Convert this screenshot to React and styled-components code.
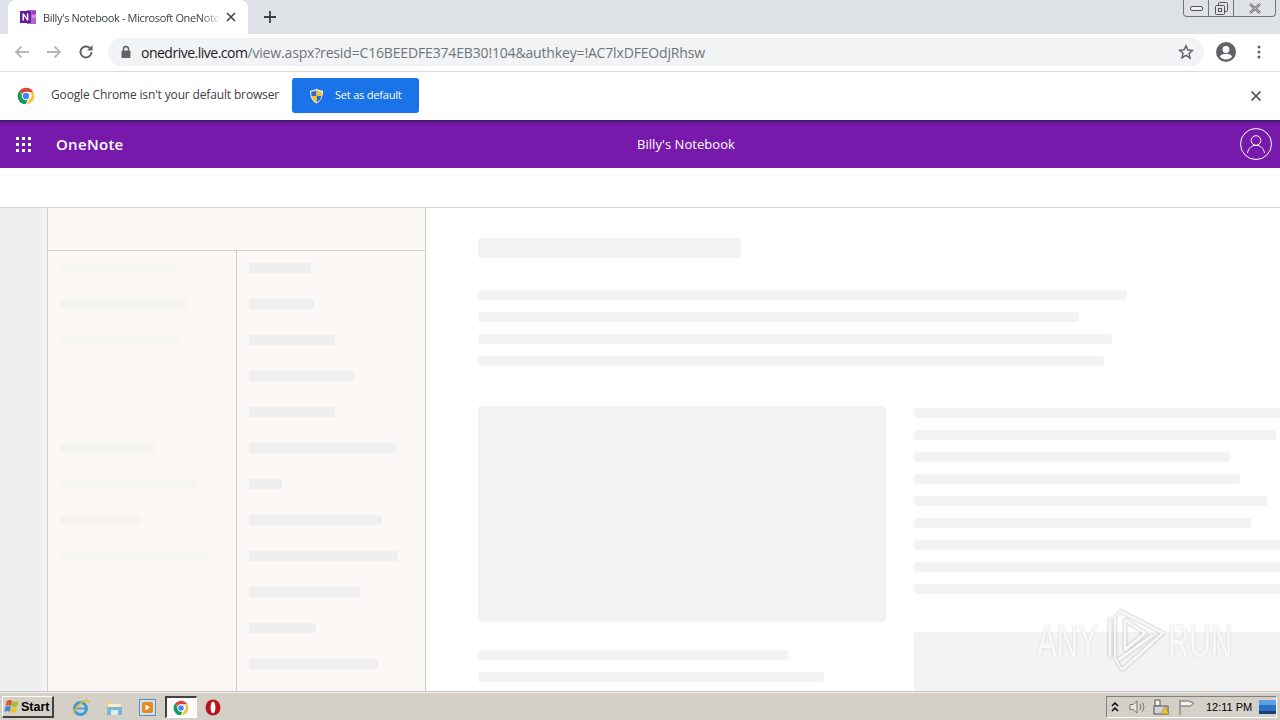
import React from 'react';
import styled, {createGlobalStyle} from 'styled-components';

const GlobalStyle = createGlobalStyle`
  html, body {
    margin: 0;
    padding: 0;
    background: #fff;
  }
  * {
    box-sizing: border-box;
  }
`;

const Screen = styled.div`
  position: relative;
  width: 1280px;
  height: 720px;
  display: flex;
  flex-direction: column;
  overflow: hidden;
  font-family: "Open Sans", "Liberation Sans", sans-serif;
`;

const TabStrip = styled.div`
  height: 34px;
  flex: none;
  display: flex;
  align-items: flex-start;
  padding: 0 4px 0 8px;
  background: #dee1e6;
`;

const Tab = styled.div`
  width: 240px;
  height: 34px;
  display: flex;
  align-items: center;
  padding: 0 12px 0 12px;
  gap: 4px;
  background: #fff;
  border-radius: 8px 8px 0 0;
`;

const TabTitle = styled.span`
  flex: 1;
  margin-left: 3px;
  font-size: 11px;
  letter-spacing: -0.36px;
  color: #3c4043;
  white-space: nowrap;
  overflow: hidden;
  -webkit-mask-image: linear-gradient(to right, #000 88%, transparent);
  mask-image: linear-gradient(to right, #000 88%, transparent);
`;

const NewTab = styled.div`
  width: 44px;
  height: 34px;
  display: flex;
  align-items: center;
  justify-content: center;
`;

const WindowControls = styled.div`
  margin-left: auto;
  width: 93px;
  height: 17px;
  display: flex;
  border: 1px solid #6f7680;
  border-top: none;
  border-radius: 0 0 4px 4px;
`;

const WindowButton = styled.div`
  width: ${p => p.$w}px;
  display: flex;
  align-items: center;
  justify-content: center;
  border-right: ${p => (p.$last ? 'none' : '1px solid #6f7680')};
`;

const Toolbar = styled.div`
  height: 38px;
  flex: none;
  display: flex;
  align-items: center;
  padding: 0 8px 1px 6px;
  background: #fff;
  border-bottom: 1px solid #dcdcdc;
`;

const NavButton = styled.div`
  width: 32px;
  height: 28px;
  display: flex;
  align-items: center;
  justify-content: center;
`;

const Omnibox = styled.div`
  width: 1096px;
  height: 28px;
  margin-left: 6px;
  display: flex;
  align-items: center;
  padding: 0 10px 0 12px;
  background: #f1f3f4;
  border-radius: 14px;
`;

const Url = styled.div`
  flex: 1;
  margin-left: 9px;
  font-size: 14px;
  letter-spacing: -0.16px;
  color: #70757a;
  white-space: nowrap;
`;

const Host = styled.span`
  color: #202124;
  letter-spacing: -0.5px;
`;

const ToolbarEnd = styled.div`
  flex: 1;
  display: flex;
  align-items: center;
  justify-content: space-between;
  padding: 0 11px 0 12px;
`;

const InfoBar = styled.div`
  height: 48px;
  flex: none;
  display: flex;
  align-items: center;
  padding: 0 19px 1px 17px;
  background: #fff;
`;

const InfoText = styled.span`
  margin-left: 16px;
  padding-bottom: 2px;
  font-size: 12px;
  letter-spacing: -0.15px;
  color: #3c4043;
  white-space: nowrap;
  width: 241px;
`;

const DefaultButton = styled.div`
  width: 127px;
  height: 35px;
  display: flex;
  align-items: center;
  padding-left: 17px;
  gap: 11px;
  background: #1a73e8;
  border-radius: 3px;
  font-size: 11px;
  letter-spacing: -0.2px;
  color: #fff;
`;

const DefaultLabel = styled.span`
  padding-bottom: 2px;
`;

const InfoClose = styled.div`
  margin-left: auto;
  display: flex;
`;

const AppBar = styled.div`
  height: 48px;
  flex: none;
  display: grid;
  grid-template-columns: 56px 1fr 40px;
  align-items: center;
  background: linear-gradient(to bottom, #3d1560 0, #6a189a 3px, #7719aa 5px);
  color: #fff;
`;

const Waffle = styled.div`
  display: grid;
  grid-template-columns: repeat(3, 3px);
  gap: 3px;
  margin-left: 16px;
  & > i {
    width: 3px;
    height: 3px;
    background: #fff;
  }
`;

const Brand = styled.div`
  display: flex;
  align-items: center;
`;

const BrandName = styled.span`
  width: 581px;
  font-size: 15px;
  font-weight: 600;
  letter-spacing: 0.3px;
`;

const NotebookName = styled.span`
  font-size: 13px;
  letter-spacing: 0.05px;
`;

const UserButton = styled.div`
  width: 32px;
  height: 32px;
  display: flex;
  align-items: center;
  justify-content: center;
  border: 1px solid #fff;
  border-radius: 50%;
`;

const Ribbon = styled.div`
  height: 40px;
  flex: none;
  background: #fff;
  border-bottom: 1px solid #d6d6d6;
`;

const Content = styled.div`
  flex: 1;
  min-height: 0;
  display: flex;
  overflow: hidden;
  background: #fff;
`;

const Rail = styled.div`
  width: 47px;
  flex: none;
  background: #efefef;
  border-right: 5px solid #f3f3f3;
`;

const NavPanel = styled.div`
  width: 379px;
  flex: none;
  display: flex;
  flex-direction: column;
  background: #fbf8f5;
  border-left: 1px solid #cfcdca;
  border-right: 1px solid #cfcdca;
`;

const NavHeader = styled.div`
  height: 43px;
  flex: none;
  display: flex;
  align-items: center;
  justify-content: center;
  border-bottom: 1px solid #d5d3d0;
`;

const NavColumns = styled.div`
  flex: 1;
  display: grid;
  grid-template-columns: 188px 1fr;
`;

const NavColumn = styled.div`
  display: flex;
  flex-direction: column;
  gap: 26px;
  padding: 12px 0 0 ${p => p.$inset}px;
  border-left: ${p => (p.$divided ? '1px solid #cfcdca' : 'none')};
`;

const Bar = styled.div`
  flex: none;
  width: ${p => p.$w}px;
  height: ${p => p.$h || 10}px;
  background: ${p => p.$tone || '#f3f3f3'};
  border-radius: 3px;
`;

const Main = styled.div`
  flex: 1;
  min-width: 0;
  display: flex;
  flex-direction: column;
  padding: 30px 0 0 52px;
`;

const TextLines = styled.div`
  display: flex;
  flex-direction: column;
  gap: 12px;
  margin-top: ${p => p.$top || 0}px;
`;

const MainGrid = styled.div`
  display: grid;
  grid-template-columns: 408px 1fr;
  column-gap: 28px;
  margin-top: 40px;
`;

const MainColumn = styled.div`
  min-width: 0;
  display: flex;
  flex-direction: column;
`;

const Picture = styled.div`
  height: ${p => p.$h}px;
  margin-top: ${p => p.$top || 0}px;
  background: #f3f3f3;
  border-radius: 2px;
`;

const Taskbar = styled.div`
  height: 28px;
  flex: none;
  display: flex;
  align-items: center;
  padding: 1px 3px 0 2px;
  background: #d4d0c8;
  border-top: 1px solid #f4f2ee;
  box-shadow: 0 -1px 0 #c6c4c0;
`;

const StartButton = styled.div`
  width: 52px;
  height: 22px;
  display: flex;
  align-items: center;
  gap: 1px;
  padding-left: 1px;
  font-family: "Liberation Sans", sans-serif;
  font-size: 12.5px;
  font-weight: 700;
  color: #000;
  border-style: solid;
  border-width: 1px 2px 2px 1px;
  border-color: #fff #404040 #404040 #fff;
`;

const QuickLaunch = styled.div`
  display: flex;
  align-items: center;
  margin-left: 10px;
`;

const LaunchItem = styled.div`
  width: ${p => (p.$active ? 32 : 33.5)}px;
  height: 22px;
  display: flex;
  align-items: center;
  justify-content: center;
  background: ${p => (p.$active ? '#fbfaf8' : 'transparent')};
  border-style: ${p => (p.$active ? 'solid' : 'none')};
  border-width: 2px 1px 1px 2px;
  border-color: #404040 #fff #fff #404040;
`;

const Tray = styled.div`
  margin-left: auto;
  width: 171px;
  height: 22px;
  display: flex;
  align-items: center;
  border: 1px solid;
  border-color: #808080 #fff #fff #808080;
`;

const TrayIcon = styled.svg`
  flex: none;
  margin-left: ${p => p.$gap || 0}px;
`;

const Clock = styled.span`
  margin-left: 10px;
  width: 61px;
  font-family: "Liberation Sans", sans-serif;
  font-size: 11px;
  color: #000;
  white-space: nowrap;
`;

const Watermark = styled.div`
  position: absolute;
  left: 1037px;
  top: 608px;
  display: flex;
  align-items: center;
  pointer-events: none;
`;

const WatermarkWord = styled.span`
  flex: none;
  min-width: 0;
  width: ${p => p.$w}px;
  font-family: "Liberation Sans", sans-serif;
  font-size: 47px;
  line-height: 66px;
  color: #f7f7f7;
  white-space: nowrap;
  -webkit-text-stroke: 1px #f9f9f9;
  text-shadow: 0 0 2px rgba(110, 110, 110, 0.55);
  transform: scaleX(0.63);
  transform-origin: left center;
`;

const WatermarkPlay = styled.svg`
  flex: none;
  filter: drop-shadow(0 0 1px rgba(110, 110, 110, 0.55));
`;

const OneNoteIcon = () => (
  <svg width="16" height="16" viewBox="0 0 16 16">
    <rect x="7" y="1" width="9" height="14" fill="#b163d0" />
    <rect x="12" y="2" width="4" height="3" fill="#a33fc4" />
    <rect x="12" y="6" width="4" height="3" fill="#d18de5" />
    <rect x="0" y="2" width="11" height="12" fill="#6a1b9a" />
    <path d="M2.500 11.500v-7h1.400l3 4.400V4.500h1.500v7H7L4 7.100v4.400z" fill="#fff" />
  </svg>
);

const ChromeIcon = ({size = 18}) => (
  <svg width={size} height={size} viewBox="0 0 48 48">
    <path d="M24 2a22 22 0 0 1 19.100 11H24a11 11 0 0 0-10 6.500L6.800 10A22 22 0 0 1 24 2z" fill="#db4437" />
    <path d="M43.100 13A22 22 0 0 1 26 45.900L35 31a11 11 0 0 0-1-18z" fill="#fbc02d" />
    <path d="M6.800 10L16 26a11 11 0 0 0 12.500 8.500L23 46A22 22 0 0 1 6.800 10z" fill="#0f9d58" />
    <circle cx="24" cy="24" r="10" fill="#4285f4" stroke="#fff" strokeWidth="3" />
  </svg>
);

const ShieldIcon = () => (
  <svg width="15" height="16" viewBox="0 0 15 16">
    <path d="M7.500 0.500C9.500 2 11.500 2.500 14 2.500c0 6-1.500 10.500-6.500 13C2.500 13 1 8.500 1 2.500 3.500 2.500 5.500 2 7.500 0.500z" fill="#f4f1e4" />
    <path d="M7.500 2v6H2.500c-.2-1.300-.3-2.500-.3-4.300C4.200 3.500 6 3 7.500 2z" fill="#2e6bd0" />
    <path d="M7.500 2c1.500 1 3.300 1.500 5.300 1.700 0 1.800-.1 3-.3 4.300h-5z" fill="#f2c230" />
    <path d="M7.500 8h5c-.6 3-2 5.200-5 6.500z" fill="#2e6bd0" />
    <path d="M7.500 8v6.500C4.500 13.200 3.100 11 2.500 8z" fill="#f2c230" />
  </svg>
);

const LockIcon = () => (
  <svg width="12" height="14" viewBox="0 0 12 14">
    <path d="M3.500 6V4a2.500 2.500 0 0 1 5 0v2" fill="none" stroke="#5f6368" strokeWidth="1.500" />
    <rect x="1.500" y="5.500" width="9" height="7.500" rx="1" fill="#5f6368" />
  </svg>
);

const StartFlag = () => (
  <svg width="16" height="15" viewBox="0 0 18 17">
    <path d="M3 2.500C5.500 0.800 7.500 1 9.300 2.200L8 8C6 6.800 4 6.800 1.800 8.300z" fill="#e2562a" />
    <path d="M10 2.400c1.800 1.200 3.800 1.200 6.500-.3L15.200 8c-2.600 1.500-4.800 1.500-6.500.3z" fill="#9cc13c" />
    <path d="M1.600 9c2.200-1.500 4.200-1.500 6.200-.3l-1.300 5.800C4.500 13.300 2.500 13.300.3 14.800z" fill="#3b8dd9" />
    <path d="M8.500 9c1.700 1.200 3.900 1.200 6.500-.3l-1.300 5.900c-2.700 1.500-4.900 1.500-6.500.3z" fill="#f2c230" />
  </svg>
);

const IEIcon = () => (
  <svg width="18" height="19" viewBox="0 0 18 19">
    <circle cx="8.500" cy="10.500" r="6" fill="none" stroke="#3d9ad8" strokeWidth="2.800" />
    <rect x="4" y="9.600" width="9" height="1.800" fill="#3d9ad8" />
    <path d="M1.500 16.500C2 11 8.500 4 14 2.500c2.200-.6 3.200.4 2.700 2.200" fill="none" stroke="#e8b92c" strokeWidth="1.400" />
  </svg>
);

const FolderIcon = () => (
  <svg width="17" height="17" viewBox="0 0 17 17">
    <path d="M1 3h5l1 2h8v11H1z" fill="#e8cf7c" />
    <rect x="2" y="5" width="13" height="3" fill="#f5eac0" />
    <rect x="1" y="8" width="15" height="8" fill="#7db5d6" />
    <rect x="5" y="11" width="7" height="5" fill="#dcecf5" />
  </svg>
);

const MediaIcon = () => (
  <svg width="17" height="17" viewBox="0 0 17 17">
    <rect x="0.500" y="0.500" width="16" height="16" fill="#cfe2f3" stroke="#5a8fc0" />
    <rect x="3" y="3" width="11" height="11" rx="2" fill="#e88a1e" />
    <path d="M6.500 5.500l4.500 3-4.500 3z" fill="#fff" />
  </svg>
);

const OperaIcon = () => (
  <svg width="16" height="17" viewBox="0 0 16 17">
    <ellipse cx="8" cy="8.500" rx="7.500" ry="8" fill="#b8141a" />
    <ellipse cx="8" cy="8.500" rx="2.400" ry="6" fill="#fff" />
  </svg>
);

export default function App() {
  const leftRows = [116, 127, 120, 0, 0, 95, 137, 81, 147];
  const rightRows = [62, 65, 86, 106, 86, 147, 33, 133, 149, 111, 67, 129];
  const introRows = [649, 601, 634, 626];
  const sideRows = [400, 362, 316, 326, 353, 337, 400, 400, 400];
  const captionRows = [311, 346];

  return (
    <Screen>
      <GlobalStyle />
      <TabStrip>
        <Tab>
          <OneNoteIcon />
          <TabTitle>Billy's Notebook - Microsoft OneNote</TabTitle>
          <svg width="10" height="10" viewBox="0 0 10 10">
            <path d="M1 1l8 8M9 1l-8 8" stroke="#444" strokeWidth="1.600" />
          </svg>
        </Tab>
        <NewTab>
          <svg width="12" height="12" viewBox="0 0 12 12">
            <path d="M6 0v12M0 6h12" stroke="#3c4043" strokeWidth="1.800" />
          </svg>
        </NewTab>
        <WindowControls>
          <WindowButton $w={25}>
            <svg width="13" height="7" viewBox="0 0 13 7">
              <rect x="0.500" y="1.500" width="12" height="4" rx="1.500" fill="#eef0f2" stroke="#555" />
            </svg>
          </WindowButton>
          <WindowButton $w={25}>
            <svg width="13" height="13" viewBox="0 0 13 13">
              <rect x="3.500" y="0.500" width="9" height="9" rx="1" fill="none" stroke="#555" />
              <rect x="0.500" y="3.500" width="9" height="9" rx="1" fill="#dee1e6" stroke="#555" />
              <rect x="3.500" y="6.500" width="3" height="3" fill="none" stroke="#555" />
            </svg>
          </WindowButton>
          <WindowButton $w={41} $last>
            <svg width="12" height="11" viewBox="0 0 12 11">
              <path d="M1 1l10 9M11 1L1 10" stroke="#666" strokeWidth="2.400" />
              <path d="M1 1l10 9M11 1L1 10" stroke="#eef0f2" strokeWidth="0.800" />
            </svg>
          </WindowButton>
        </WindowControls>
      </TabStrip>

      <Toolbar>
        <NavButton>
          <svg width="16" height="14" viewBox="0 0 16 14">
            <path d="M15 7H2M7.500 1.500L2 7l5.500 5.500" fill="none" stroke="#b5b8bc" strokeWidth="1.800" />
          </svg>
        </NavButton>
        <NavButton>
          <svg width="16" height="14" viewBox="0 0 16 14">
            <path d="M1 7h13M8.500 1.500L14 7l-5.500 5.500" fill="none" stroke="#b5b8bc" strokeWidth="1.800" />
          </svg>
        </NavButton>
        <NavButton>
          <svg width="16" height="16" viewBox="0 0 16 16">
            <path d="M13.500 8A5.500 5.500 0 1 1 11.800 4" fill="none" stroke="#5f6368" strokeWidth="1.900" />
            <path d="M14.500 1v5.500H9z" fill="#5f6368" />
          </svg>
        </NavButton>
        <Omnibox>
          <LockIcon />
          <Url>
            <Host>onedrive.live.com</Host>/view.aspx?resid=C16BEEDFE374EB30!104&amp;authkey=!AC7lxDFEOdjRhsw
          </Url>
          <svg width="16" height="16" viewBox="0 0 24 24">
            <path d="M12 2.800l2.800 6.300 6.800.7-5.100 4.600 1.500 6.700L12 17l-6 3.600 1.500-6.700-5.100-4.600 6.800-.7z" fill="none" stroke="#5f6368" strokeWidth="2.200" />
          </svg>
        </Omnibox>
        <ToolbarEnd>
          <svg width="20" height="20" viewBox="0 0 20 20">
            <circle cx="10" cy="10" r="10" fill="#5f6368" />
            <circle cx="10" cy="7.500" r="3.400" fill="#fff" />
            <path d="M3.800 14.500C5 12.300 7.500 11.700 10 11.700s5 .6 6.200 2.800C14.800 16.400 12.500 17.400 10 17.400s-4.800-1-6.200-2.900z" fill="#fff" />
          </svg>
          <svg width="4" height="14" viewBox="0 0 4 14">
            <circle cx="2" cy="2" r="1.500" fill="#5f6368" />
            <circle cx="2" cy="7" r="1.500" fill="#5f6368" />
            <circle cx="2" cy="12" r="1.500" fill="#5f6368" />
          </svg>
        </ToolbarEnd>
      </Toolbar>

      <InfoBar>
        <ChromeIcon />
        <InfoText>Google Chrome isn't your default browser</InfoText>
        <DefaultButton>
          <ShieldIcon />
          <DefaultLabel>Set as default</DefaultLabel>
        </DefaultButton>
        <InfoClose>
          <svg width="10" height="10" viewBox="0 0 10 10">
            <path d="M0.500 0.500l9 9M9.500 0.500l-9 9" stroke="#5f6368" strokeWidth="1.900" />
          </svg>
        </InfoClose>
      </InfoBar>

      <AppBar>
        <Waffle>
          {Array.from({length: 9}).map((_, i) => <i key={i} />)}
        </Waffle>
        <Brand>
          <BrandName>OneNote</BrandName>
          <NotebookName>Billy's Notebook</NotebookName>
        </Brand>
        <UserButton>
          <svg width="22" height="22" viewBox="0 0 22 22">
            <circle cx="11" cy="7.500" r="4.800" fill="none" stroke="#fff" />
            <path d="M2.500 20c.8-4.800 4-7.700 8.500-7.700s7.700 2.900 8.500 7.700" fill="none" stroke="#fff" />
          </svg>
        </UserButton>
      </AppBar>

      <Ribbon />

      <Content>
        <Rail />
        <NavPanel>
          <NavHeader>
            <Bar $w={118} $h={8} $tone="#f9f7f4" />
          </NavHeader>
          <NavColumns>
            <NavColumn $inset={12}>
              {leftRows.map((w, i) => <Bar key={i} $w={w} $tone="#f6f5f2" />)}
            </NavColumn>
            <NavColumn $divided $inset={12}>
              {rightRows.map((w, i) => <Bar key={i} $w={w} $tone="#efefed" />)}
            </NavColumn>
          </NavColumns>
        </NavPanel>
        <Main>
          <Bar $w={263} $h={20} />
          <TextLines $top={32}>
            {introRows.map((w, i) => <Bar key={i} $w={w} />)}
          </TextLines>
          <MainGrid>
            <MainColumn>
              <Picture $h={216} />
              <TextLines $top={28}>
                {captionRows.map((w, i) => <Bar key={i} $w={w} />)}
              </TextLines>
            </MainColumn>
            <MainColumn>
              <TextLines $top={2}>
                {sideRows.map((w, i) => <Bar key={i} $w={w} />)}
              </TextLines>
              <Picture $h={80} $top={38} />
            </MainColumn>
          </MainGrid>
        </Main>
      </Content>

      <Taskbar>
        <StartButton>
          <StartFlag />
          Start
        </StartButton>
        <QuickLaunch>
          <LaunchItem><IEIcon /></LaunchItem>
          <LaunchItem><FolderIcon /></LaunchItem>
          <LaunchItem><MediaIcon /></LaunchItem>
          <LaunchItem $active><ChromeIcon size={16} /></LaunchItem>
          <LaunchItem><OperaIcon /></LaunchItem>
        </QuickLaunch>
        <Tray>
          <TrayIcon width="18" height="16" viewBox="0 0 18 16">
            <path d="M5 7l3-3 3 3M5 12l3-3 3 3" fill="none" stroke="#000" strokeWidth="1.500" />
          </TrayIcon>
          <TrayIcon $gap={2} width="22" height="16" viewBox="0 0 22 16">
            <path d="M3 5.500h3L10 2v12l-4-3.500H3z" fill="#e8e6e0" stroke="#777" />
            <path d="M13 5q2 3 0 6M15.500 3.500q3 4.500 0 9" fill="none" stroke="#777" />
          </TrayIcon>
          <TrayIcon $gap={4} width="18" height="16" viewBox="0 0 18 16">
            <rect x="2" y="1" width="5" height="6" fill="#f4f2ea" stroke="#555" />
            <rect x="1" y="7" width="14" height="8" fill="#cfd6da" stroke="#555" />
            <path d="M12 7l4 8H8z" fill="#f2c230" stroke="#8a6d10" strokeWidth="0.500" />
          </TrayIcon>
          <TrayIcon $gap={7} width="18" height="16" viewBox="0 0 18 16">
            <path d="M2 1v15M2.500 2h8l5 2-3 3H2.500" fill="#f2f0ea" stroke="#666" />
          </TrayIcon>
          <Clock>12:11 PM</Clock>
          <TrayIcon width="17" height="14" viewBox="0 0 17 14">
            <rect width="17" height="14" fill="#2a72c8" />
            <rect y="0" width="17" height="5" fill="#5aa0e4" />
            <rect y="11" width="17" height="3" fill="#1f3d6e" />
          </TrayIcon>
        </Tray>
      </Taskbar>

      <Watermark>
        <WatermarkWord $w={69}>ANY</WatermarkWord>
        <WatermarkPlay width="62" height="66" viewBox="0 0 62 66">
          <path d="M14 3L57 25L16 62" fill="none" stroke="#f8f8f8" strokeWidth="3" strokeLinejoin="round" />
          <path d="M14 3L9 9V50L16 62" fill="none" stroke="#f8f8f8" strokeWidth="2" />
          <path d="M4 10V49" fill="none" stroke="#f8f8f8" strokeWidth="3" />
          <path d="M19 12L39 25L19 42z" fill="none" stroke="#f8f8f8" strokeWidth="3" strokeLinejoin="round" />
          <path d="M12 52L47 27" fill="none" stroke="#f8f8f8" strokeWidth="3" />
        </WatermarkPlay>
        <WatermarkWord $w={66}>RUN</WatermarkWord>
      </Watermark>
    </Screen>
  );
}
